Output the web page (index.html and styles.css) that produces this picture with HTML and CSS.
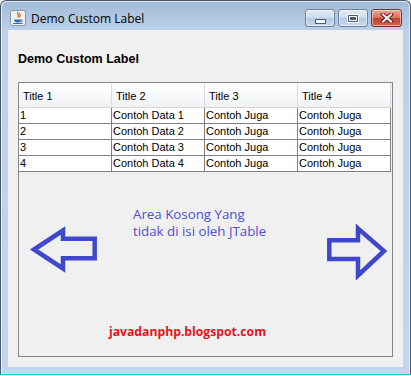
FILE: index.html
```html
<!DOCTYPE html>
<html lang="id">
<head>
    <meta charset="UTF-8">
    <meta name="viewport" content="width=device-width, initial-scale=1.0">
    <title>Demo Custom Label</title>
    <link rel="stylesheet" href="styles.css">
</head>
<body>
    <div class="window">
        <div class="titlebar">
            <svg class="app-icon" width="16" height="16" viewBox="0 0 16 16">
                <rect x="0.5" y="0.5" width="15" height="15" rx="2" fill="#eef1f5" stroke="#8a96a6"/>
                <path d="M8 2 C6 4 10 5 8 7.5 M10 3 C9 4.5 11 5 9.5 7" stroke="#e0621c" stroke-width="1.3" fill="none"/>
                <path d="M4 9.5 H11 C11 12 9.5 12.5 7.5 12.5 C5.5 12.5 4 12 4 9.5 Z" fill="#3d6cb4"/>
                <path d="M11 10 C13 10 13 12 10.5 12" stroke="#3d6cb4" stroke-width="1" fill="none"/>
                <path d="M3 13.5 H12.5" stroke="#3d6cb4" stroke-width="1.2"/>
            </svg>
            <span class="title">Demo Custom Label</span>
            <div class="controls">
                <span class="ctl"><i class="glyph-min"></i></span>
                <span class="ctl"><i class="glyph-max"></i></span>
                <span class="ctl close">
                    <svg width="14" height="10" viewBox="0 0 14 10">
                        <path d="M3 1.5 L11 8.5 M11 1.5 L3 8.5" stroke="#5c2319" stroke-width="4" stroke-linecap="square"/>
                        <path d="M3 1.5 L11 8.5 M11 1.5 L3 8.5" stroke="#ffffff" stroke-width="2" stroke-linecap="square"/>
                    </svg>
                </span>
            </div>
        </div>

        <div class="client">
            <h1 class="heading">Demo Custom Label</h1>
            <div class="panel">
                <table class="grid">
                    <thead>
                        <tr>
                            <th>Title 1</th>
                            <th>Title 2</th>
                            <th>Title 3</th>
                            <th>Title 4</th>
                        </tr>
                    </thead>
                    <tbody>
                        <tr><td>1</td><td>Contoh Data 1</td><td>Contoh Juga</td><td>Contoh Juga</td></tr>
                        <tr><td>2</td><td>Contoh Data 2</td><td>Contoh Juga</td><td>Contoh Juga</td></tr>
                        <tr><td>3</td><td>Contoh Data 3</td><td>Contoh Juga</td><td>Contoh Juga</td></tr>
                        <tr><td>4</td><td>Contoh Data 4</td><td>Contoh Juga</td><td>Contoh Juga</td></tr>
                    </tbody>
                </table>

                <div class="empty">
                    <div class="empty-row">
                        <svg class="arrow arrow-left" width="70" height="48" viewBox="0 0 70 48">
                            <polygon points="5,24.5 34,5.5 34,13.7 65.7,13.7 65.7,33.3 34,33.3 34,43.5"/>
                        </svg>
                        <p class="note">Area Kosong Yang<br>tidak di isi oleh JTable</p>
                        <svg class="arrow arrow-right" width="66" height="56" viewBox="0 0 66 56">
                            <polygon points="4.3,16.3 33,16.3 33,4.5 59,27 33,51.5 33,35 4.3,35"/>
                        </svg>
                    </div>
                    <p class="credit">javadanphp.blogspot.com</p>
                </div>
            </div>
        </div>
    </div>
</body>
</html>
```

FILE: styles.css
```css
body {
    margin: 0;
    background-color: #ffffff;
}

.window {
    width: 411px;
    height: 375px;
    box-sizing: border-box;
    border: 1px solid #4d5a6b;
    border-bottom: 1px solid #2cc4e4;
    border-radius: 6px 6px 0 0;
    background: linear-gradient(#a3bad7, #bcd1ea 30px, #c2d7ee);
    box-shadow: inset 1px 1px 0 rgba(255, 255, 255, 0.6), inset -1px 0 0 rgba(255, 255, 255, 0.6);
    overflow: hidden;
}

.titlebar {
    height: 29px;
    display: flex;
    align-items: center;
    padding: 5px 8px 0 9px;
    box-sizing: border-box;
}

.app-icon {
    flex: none;
}

.title {
    margin-left: 5px;
    font-family: "Open Sans", sans-serif;
    font-size: 12px;
    color: #000;
}

.controls {
    margin-left: auto;
    display: flex;
    gap: 3px;
}

.ctl {
    width: 30px;
    height: 18px;
    box-sizing: border-box;
    border: 1px solid #6c7f98;
    border-radius: 3px;
    background: linear-gradient(#e3ecf7, #c9daee 50%, #b3c9e4 51%, #c6d8ee);
    box-shadow: inset 0 0 0 1px rgba(255, 255, 255, 0.5);
    display: flex;
    align-items: center;
    justify-content: center;
}

.ctl.close {
    width: 31px;
    border-color: #7b3027;
    background: linear-gradient(#e9a898, #d6705b 50%, #c2432f 51%, #d4604a);
}

.glyph-min {
    width: 9px;
    height: 3px;
    margin-top: 6px;
    background: #fff;
    border: 1px solid #4a5d78;
}

.glyph-max {
    width: 8px;
    height: 5px;
    border: 1px solid #4a5d78;
    box-shadow: inset 0 0 0 1px #fff;
    background: #4a5d78;
    outline: 1px solid #fff;
}

.client {
    margin: 0 7px;
    height: 337px;
    box-sizing: border-box;
    padding: 21px 10px 10px;
    background-color: #f0f0f0;
}

.heading {
    margin: 0 0 15px;
    font-family: "Liberation Sans", Arial, sans-serif;
    font-size: 12.5px;
    font-weight: bold;
    line-height: 16px;
    color: #000;
}

.panel {
    height: 275px;
    box-sizing: border-box;
    border: 1px solid #82878d;
    background-color: #f0f0f0;
    display: flex;
    flex-direction: column;
}

.grid {
    width: 372px;
    table-layout: fixed;
    border-collapse: separate;
    border-spacing: 0;
    font-family: "Liberation Sans", Arial, sans-serif;
    font-size: 11px;
    color: #000;
}

.grid th {
    height: 25px;
    box-sizing: border-box;
    padding: 6px 0 0 4px;
    text-align: left;
    font-weight: normal;
    line-height: 15px;
    vertical-align: top;
    background: linear-gradient(#ffffff, #f7f8f9 60%, #f0f1f2);
    border-right: 1px solid #dcdde0;
    border-bottom: 1px solid #d5d5d5;
}

.grid td {
    height: 15px;
    box-sizing: content-box;
    padding: 0 0 0 1px;
    line-height: 15px;
    background-color: #ffffff;
    border-right: 1px solid #808080;
    border-bottom: 1px solid #808080;
    white-space: nowrap;
    overflow: hidden;
}

.empty {
    flex: 1;
}

.empty-row {
    display: flex;
    align-items: flex-start;
}

.arrow {
    flex: none;
}

.arrow polygon {
    fill: none;
    stroke: #3f48cc;
    stroke-width: 4.5;
    stroke-linejoin: miter;
}

.arrow-left {
    margin: 53px 0 0 10px;
}

.arrow-right {
    margin: 52px 1px 0 auto;
}

.note {
    margin: 34px 0 0 34px;
    font-family: "Open Sans", sans-serif;
    font-size: 13.3px;
    line-height: 17px;
    color: #4f4fd6;
}

.credit {
    margin: 43px 0 0 90px;
    font-family: "Open Sans", sans-serif;
    font-size: 12.2px;
    font-weight: bold;
    line-height: 17px;
    color: #e8131b;
}
```
